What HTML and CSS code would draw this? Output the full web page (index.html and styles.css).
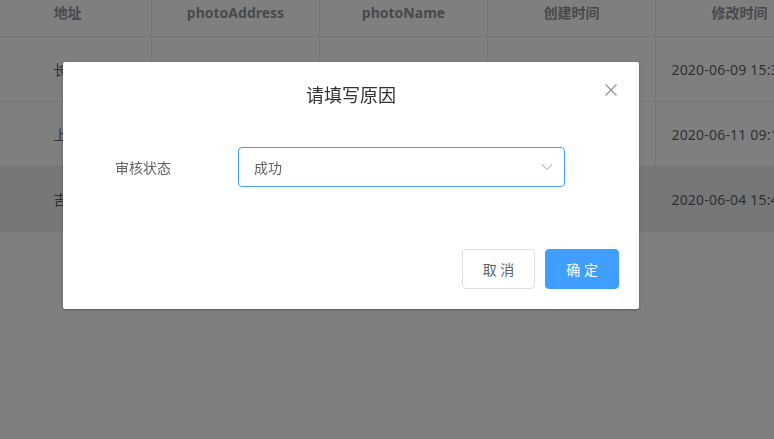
FILE: index.html
```html
<!DOCTYPE html>
<html lang="zh-CN">
<head>
<meta charset="UTF-8">
<title>审核</title>
<link rel="stylesheet" href="styles.css">
</head>
<body>
  <div class="table-wrap">
    <div class="table">
      <div class="row head">
        <div class="cell">地址</div>
        <div class="cell">photoAddress</div>
        <div class="cell">photoName</div>
        <div class="cell">创建时间</div>
        <div class="cell">修改时间</div>
      </div>
      <div class="row">
        <div class="cell">长春</div>
        <div class="cell"></div>
        <div class="cell"></div>
        <div class="cell date">2020-06-09 15:32:10</div>
        <div class="cell date">2020-06-09 15:32:10</div>
      </div>
      <div class="row">
        <div class="cell">上海</div>
        <div class="cell"></div>
        <div class="cell"></div>
        <div class="cell date">2020-06-11 09:14:21</div>
        <div class="cell date">2020-06-11 09:14:21</div>
      </div>
      <div class="row hover">
        <div class="cell">吉林</div>
        <div class="cell"></div>
        <div class="cell"></div>
        <div class="cell date">2020-06-04 15:46:38</div>
        <div class="cell date">2020-06-04 15:46:38</div>
      </div>
    </div>
  </div>

  <div class="mask"></div>

  <div class="dialog-wrap">
    <div class="dialog">
      <div class="dialog-header">
        <span class="dialog-title">请填写原因</span>
        <button class="dialog-close" type="button">
          <svg width="16" height="16" viewBox="0 0 16 16">
            <path d="M2.5 2.5 L13.5 13.5 M13.5 2.5 L2.5 13.5" stroke="#909399" stroke-width="1.2" fill="none"/>
          </svg>
        </button>
      </div>
      <div class="dialog-body">
        <div class="form-item">
          <label class="form-label">审核状态</label>
          <div class="select">
            <span class="select-value">成功</span>
            <svg class="select-arrow" width="14" height="14" viewBox="0 0 14 14">
              <path d="M2 4.5 L7 9.5 L12 4.5" stroke="#c0c4cc" stroke-width="1.1" fill="none"/>
            </svg>
          </div>
        </div>
      </div>
      <div class="dialog-footer">
        <button class="btn" type="button">取 消</button>
        <button class="btn btn-primary" type="button">确 定</button>
      </div>
    </div>
  </div>
</body>
</html>
```

FILE: styles.css
```css
body {
  margin: 0;
  font-family: "Noto Sans", "Noto Sans CJK SC", sans-serif;
  font-size: 14px;
  color: #606266;
  background: #fff;
  overflow: hidden;
  height: 439px;
}

/* table behind the dialog, scrolled a little to the right */
.table-wrap {
  overflow: hidden;
}

.table {
  margin-left: -16px;
  width: 840px;
}

.row {
  display: grid;
  grid-template-columns: repeat(5, 168px);
  height: 65px;
  border-bottom: 1px solid #ebeef5;
  box-sizing: border-box;
}

.row.head {
  height: 37px;
  color: #909399;
  font-weight: bold;
}

.row.hover {
  background: #eceef2;
}

.cell {
  display: flex;
  align-items: center;
  justify-content: center;
  border-right: 1px solid #ebeef5;
  white-space: nowrap;
  overflow: hidden;
}

.cell.date {
  letter-spacing: 0.2px;
}

.row.head .cell {
  padding-bottom: 12px;
}

.mask {
  position: fixed;
  inset: 0;
  background: rgba(0, 0, 0, 0.5);
}

/* dialog */
.dialog-wrap {
  position: fixed;
  inset: 0;
  padding: 62px 0 0 63px;
}

.dialog {
  width: 576px;
  background: #fff;
  border-radius: 2px;
  box-shadow: 0 1px 3px rgba(0, 0, 0, 0.3);
}

.dialog-header {
  position: relative;
  padding: 21px 20px 10px;
  text-align: center;
}

.dialog-title {
  font-size: 18px;
  line-height: 24px;
  color: #303133;
}

.dialog-close {
  position: absolute;
  top: 20px;
  right: 20px;
  padding: 0;
  border: none;
  background: none;
  width: 16px;
  height: 16px;
}

.dialog-body {
  padding: 30px 20px;
}

.form-item {
  display: flex;
  align-items: center;
  margin-bottom: 22px;
}

.form-label {
  width: 155px;
  padding-left: 32px;
  box-sizing: border-box;
  color: #606266;
}

.select {
  width: 327px;
  height: 40px;
  box-sizing: border-box;
  border: 1px solid #409eff;
  border-radius: 4px;
  display: flex;
  align-items: center;
  justify-content: space-between;
  padding: 0 10px 0 15px;
}

.select-value {
  color: #606266;
}

.dialog-footer {
  display: flex;
  justify-content: flex-end;
  gap: 10px;
  padding: 10px 20px 20px;
}

.btn {
  font-family: inherit;
  font-size: 14px;
  height: 40px;
  padding: 0 20px;
  border: 1px solid #dcdfe6;
  border-radius: 4px;
  background: #fff;
  color: #606266;
  cursor: pointer;
}

.btn-primary {
  background: #409eff;
  border-color: #409eff;
  color: #fff;
}
```
